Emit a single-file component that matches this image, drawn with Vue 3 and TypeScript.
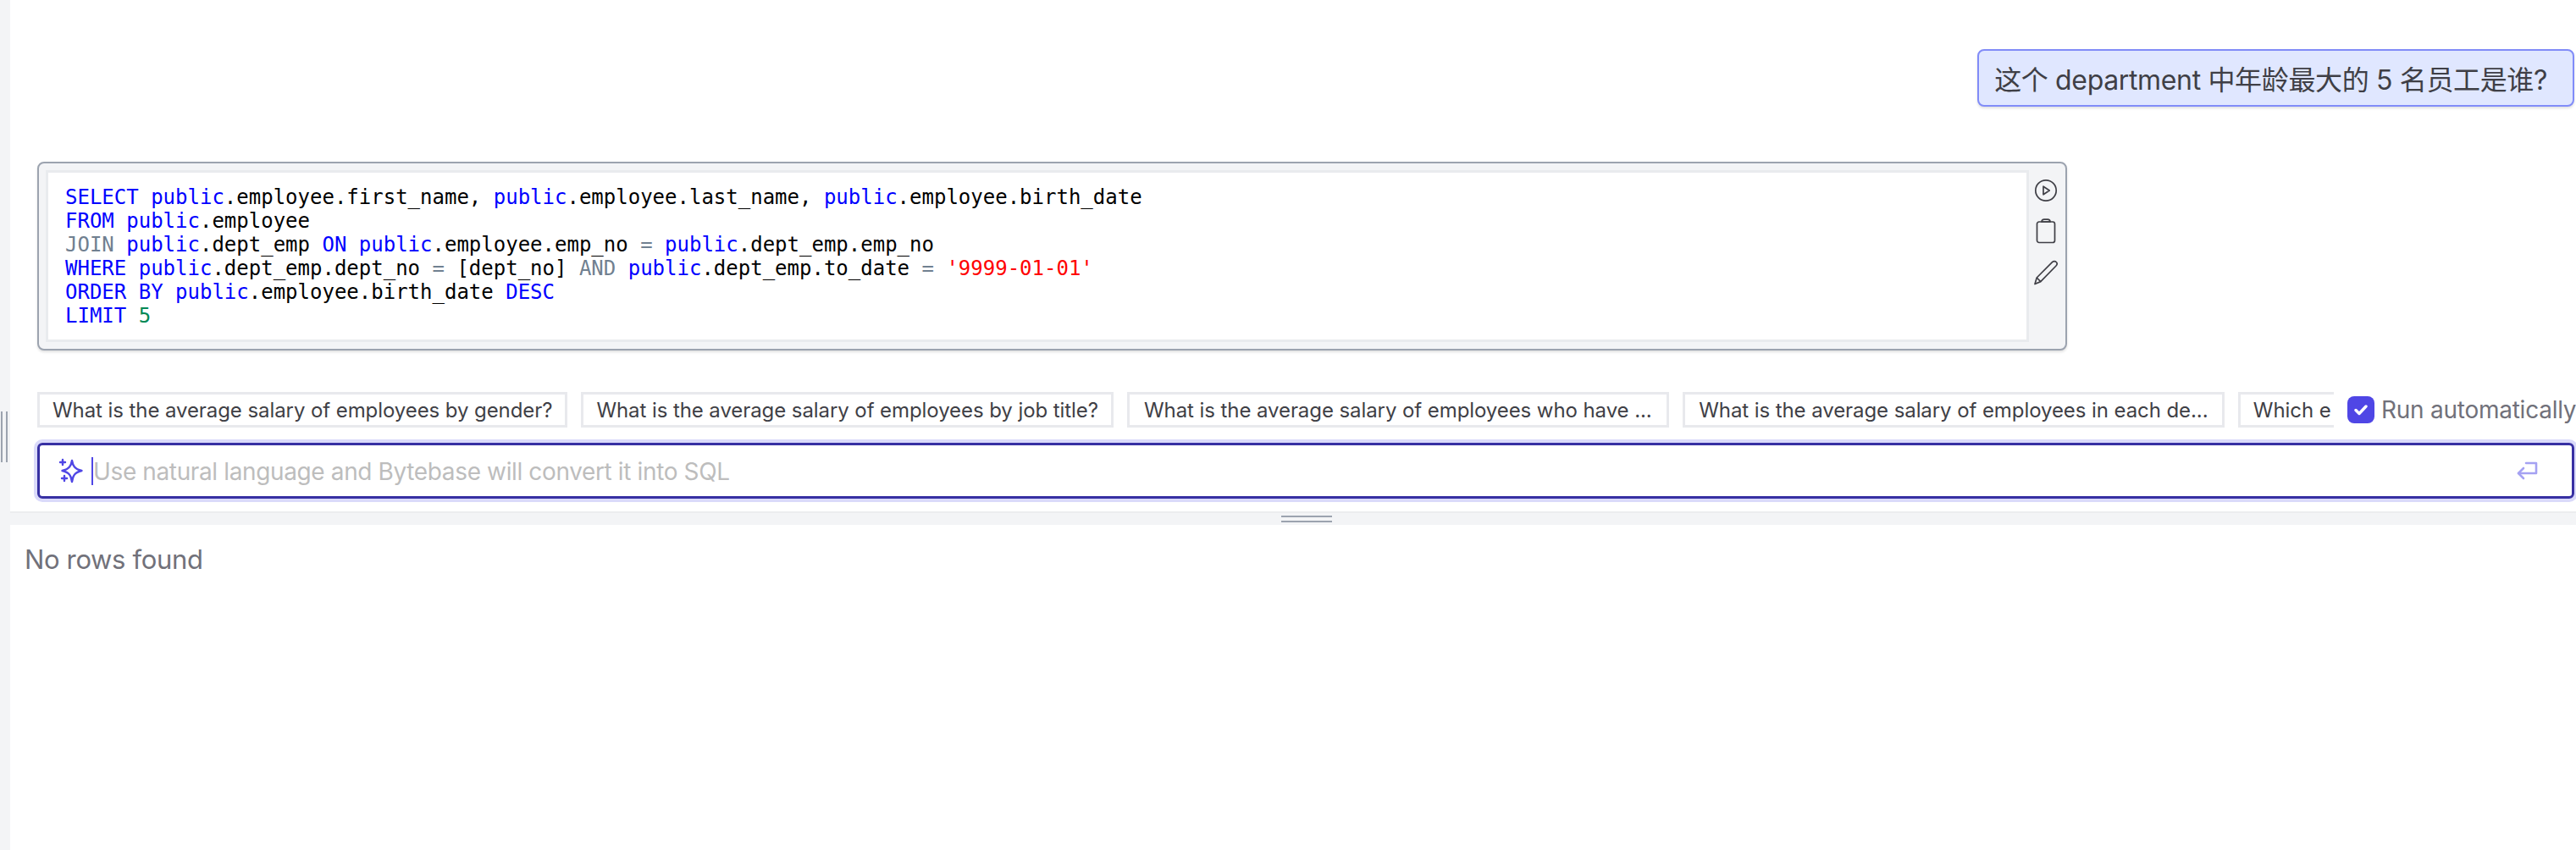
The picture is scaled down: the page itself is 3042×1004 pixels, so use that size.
<script setup lang="ts">
type Tok = { t: string; c?: string };
const kw = (t: string): Tok => ({ t, c: "kw" });
const op = (t: string): Tok => ({ t, c: "op" });
const p = kw("public");
const lines: Tok[][] = [
  [kw("SELECT"), { t: " " }, p, { t: ".employee.first_name, " }, p, { t: ".employee.last_name, " }, p, { t: ".employee.birth_date" }],
  [kw("FROM"), { t: " " }, p, { t: ".employee" }],
  [op("JOIN"), { t: " " }, p, { t: ".dept_emp " }, kw("ON"), { t: " " }, p, { t: ".employee.emp_no " }, op("="), { t: " " }, p, { t: ".dept_emp.emp_no" }],
  [kw("WHERE"), { t: " " }, p, { t: ".dept_emp.dept_no " }, op("="), { t: " [dept_no] " }, op("AND"), { t: " " }, p, { t: ".dept_emp.to_date " }, op("="), { t: " " }, { t: "'9999-01-01'", c: "str" }],
  [kw("ORDER BY"), { t: " " }, p, { t: ".employee.birth_date " }, kw("DESC")],
  [kw("LIMIT"), { t: " " }, { t: "5", c: "num" }],
];
const chips: { text: string; wide?: boolean }[] = [
  { text: "What is the average salary of employees by gender?" },
  { text: "What is the average salary of employees by job title?" },
  { text: "What is the average salary of employees who have ...", wide: true },
  { text: "What is the average salary of employees in each de...", wide: true },
  { text: "Which e" },
];
</script>

<template>
  <div class="page">
    <div class="gutter"><span class="vhandle"></span></div>
    <div class="main">
      <section class="chat">
        <div class="bubble-row">
          <div class="bubble">这个 department 中年龄最大的 5 名员工是谁?</div>
        </div>
        <div class="code-card">
          <pre class="code"><code><span v-for="(line, i) in lines" :key="i" class="line"><span v-for="(tok, j) in line" :key="j" :class="tok.c">{{ tok.t }}</span></span></code></pre>
          <div class="actions">
            <svg width="28" height="28" viewBox="0 0 28 28" fill="none" stroke="#3f3f46" stroke-width="1.7" stroke-linejoin="round">
              <circle cx="14" cy="14" r="12.2" />
              <path d="M11 9.2 L18.2 14 L11 18.8 Z" />
            </svg>
            <svg width="28" height="30" viewBox="0 0 28 30" fill="none" stroke="#3f3f46" stroke-width="1.7" stroke-linejoin="round">
              <rect x="3.5" y="4" width="21" height="24.5" rx="2.5" />
              <path d="M9 4 C9 1.8 10.5 1.2 12 1.2 H16 C17.5 1.2 19 1.8 19 4 Z" />
            </svg>
            <svg width="30" height="30" viewBox="0 0 30 30" fill="none" stroke="#3f3f46" stroke-width="1.7" stroke-linejoin="round">
              <path d="M2 28.5 L4.2 21 L22.5 2.6 C24 1.2 26 1.2 27.2 2.5 C28.5 3.8 28.4 5.6 27 7 L8.8 25.6 Z" />
              <path d="M4.2 21 L8.8 25.6" />
            </svg>
          </div>
        </div>
        <div class="suggest-row">
          <div class="chips">
            <button v-for="chip in chips" :key="chip.text" class="chip" :class="{ wide: chip.wide }">{{ chip.text }}</button>
          </div>
          <label class="auto">
            <span class="check">
              <svg width="20" height="20" viewBox="0 0 20 20" fill="none" stroke="#fff" stroke-width="3.4" stroke-linecap="round" stroke-linejoin="round">
                <path d="M4 10.5 L8 14.5 L16 6" />
              </svg>
            </span>
            <span>Run automatically</span>
          </label>
        </div>
        <div class="input">
          <svg class="spark" width="34" height="34" viewBox="0 0 34 34" fill="none" stroke="#4f46e5" stroke-width="2.4" stroke-linecap="round" stroke-linejoin="round">
            <path d="M18 5 C19 11 21 15 29.5 17 C21 19 19 23 18 30 C17 23 15 19 6.5 17 C15 15 17 11 18 5 Z" />
            <path d="M7 4 V10 M4 7 H10" />
            <path d="M9 23 V29 M6 26 H12" />
          </svg>
          <span class="caret"></span>
          <span class="placeholder">Use natural language and Bytebase will convert it into SQL</span>
          <svg class="enter" width="26" height="24" viewBox="0 0 26 24" fill="none" stroke="#a5a2f2" stroke-width="2.6" stroke-linecap="round" stroke-linejoin="round">
            <path d="M12 3 H24 V15 H3" />
            <path d="M9 9 L3 15 L9 21" />
          </svg>
        </div>
      </section>
      <div class="split"><span class="hhandle"></span></div>
      <section class="result">No rows found</section>
    </div>
  </div>
</template>

<style scoped>
.page {
  display: flex;
  width: 3042px;
  height: 1004px;
  overflow: hidden;
  background: #fff;
  font-family: Inter, "Noto Sans CJK SC", sans-serif;
}
.gutter {
  position: relative;
  flex: 0 0 12px;
  background: #f3f4f6;
}
.vhandle {
  position: absolute;
  left: 1px;
  top: 486px;
  width: 4px;
  height: 60px;
  border-left: 2px solid #9ca3af;
  border-right: 2px solid #9ca3af;
  box-sizing: content-box;
}
.main {
  flex: 1;
  min-width: 0;
  display: flex;
  flex-direction: column;
}
.chat {
  height: 606px;
  box-sizing: border-box;
  padding: 58px 2px 0 32px;
  border-bottom: 2px solid #ecedef;
}
.bubble-row {
  display: flex;
  justify-content: flex-end;
}
.bubble {
  height: 68px;
  box-sizing: border-box;
  padding: 0 30px 0 18px;
  display: flex;
  align-items: center;
  font-size: 32px;
  letter-spacing: -0.35px;
  color: #3f3f46;
  background: #e0e7ff;
  border: 2px solid #818cf8;
  border-radius: 8px;
  box-shadow: 0 2px 3px rgba(0, 0, 0, 0.12);
  white-space: nowrap;
}
.code-card {
  margin-top: 65px;
  width: 2397px;
  height: 223px;
  box-sizing: border-box;
  display: flex;
  padding: 8px 0 8px 8px;
  background: #f3f4f6;
  border: 2px solid #9ca3af;
  border-radius: 8px;
  box-shadow: 0 2px 3px rgba(0, 0, 0, 0.12);
}
.code {
  margin: 0;
  width: 2342px;
  box-sizing: border-box;
  padding: 15px 20px;
  background: #fff;
  border: 3px solid #e9ebee;
  font-family: "DejaVu Sans Mono", monospace;
  font-size: 24px;
  line-height: 28px;
  color: #000;
}
.line {
  display: block;
  height: 28px;
}
.kw { color: #0000ff; }
.op { color: #708090; }
.str { color: #ff0000; }
.num { color: #008855; }
.actions {
  flex: 1;
  display: flex;
  flex-direction: column;
  align-items: center;
  gap: 19px;
  padding: 10px 3px 0 0;
}
.suggest-row {
  margin-top: 49px;
  height: 42px;
  display: flex;
  align-items: center;
  gap: 16px;
}
.chips {
  flex: 0 0 2712px;
  display: flex;
  gap: 16px;
  overflow: hidden;
}
.chip {
  flex: 0 0 auto;
  height: 42px;
  padding: 1px 15px 0;
  box-sizing: border-box;
  background: #fff;
  border: 3px solid #e8e9ed;
  font-family: inherit;
  font-size: 24px;
  letter-spacing: -0.08px;
  color: #3f3f46;
  white-space: nowrap;
}
.chip.wide {
  width: 640px;
}
.auto {
  flex: 0 0 auto;
  display: flex;
  align-items: center;
  gap: 8px;
  font-size: 28px;
  letter-spacing: -0.25px;
  color: #71717a;
  white-space: nowrap;
}
.check {
  width: 32px;
  height: 32px;
  border-radius: 8px;
  background: #4f46e5;
  display: flex;
  align-items: center;
  justify-content: center;
}
.input {
  margin-top: 18px;
  height: 66px;
  box-sizing: border-box;
  display: flex;
  align-items: center;
  padding: 0 40px 0 20px;
  border: 3px solid #3730a3;
  border-radius: 6px;
  box-shadow: 0 0 0 4px #dadafa;
}
.caret {
  width: 2px;
  height: 33px;
  margin-left: 7px;
  background: #4f46e5;
}
.placeholder {
  flex: 1;
  padding-top: 2px;
  font-size: 28px;
  letter-spacing: -0.37px;
  color: #bdbdbd;
}
.split {
  height: 14px;
  padding-left: 32px;
  background: #f3f4f6;
  display: flex;
  justify-content: center;
  align-items: center;
}
.hhandle {
  width: 60px;
  height: 4px;
  border-top: 2px solid #9ca3af;
  border-bottom: 2px solid #9ca3af;
  box-sizing: content-box;
}
.result {
  flex: 1;
  padding: 21px 17px;
  font-size: 31px;
  letter-spacing: -0.35px;
  line-height: 40px;
  color: #71717a;
}
</style>
